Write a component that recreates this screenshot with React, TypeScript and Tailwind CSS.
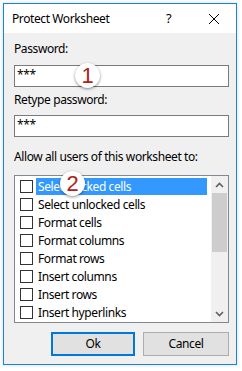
import React from "react";

const items = [
  "Select locked cells",
  "Select unlocked cells",
  "Format cells",
  "Format columns",
  "Format rows",
  "Insert columns",
  "Insert rows",
  "Insert hyperlinks",
];

function Badge(props: { n: string; className: string }) {
  return (
    <div
      className={
        "absolute w-[25px] h-[25px] rounded-full bg-white flex items-center justify-center text-[#b0211a] text-[22px] leading-none tracking-normal shadow-[0_1px_3px_rgba(0,0,0,0.45)] " +
        props.className
      }
      style={{ fontFamily: '"Liberation Sans", sans-serif' }}
    >
      {props.n}
    </div>
  );
}

function Chevron(props: { up?: boolean }) {
  return (
    <svg width="9" height="6" viewBox="0 0 9 6">
      <path
        d={props.up ? "M1 5 L4.5 1.5 L8 5" : "M1 1 L4.5 4.5 L8 1"}
        fill="none"
        stroke="#606060"
        strokeWidth="1.6"
      />
    </svg>
  );
}

export default function App() {
  return (
    <div
      className="w-[242px] h-[371px] bg-white pl-[3px] pt-[3px] text-[12px] tracking-[-0.4px] text-black"
      style={{ fontFamily: '"Noto Sans", sans-serif' }}
    >
      <div className="relative w-[234px] h-[362px] border border-[#1883d7] flex flex-col shadow-[0_0_4px_rgba(0,0,0,0.15)]">
        {/* title bar */}
        <div className="h-[29px] bg-white flex items-center shrink-0">
          <div className="flex-1 pl-[8px] leading-none">Protect Worksheet</div>
          <div className="w-[45px] h-full flex items-center justify-center text-[13px]">?</div>
          <div className="w-[45px] h-full flex items-center justify-center">
            <svg width="10" height="10" viewBox="0 0 10 10">
              <path d="M0 0 L10 10 M10 0 L0 10" stroke="#000" strokeWidth="1" />
            </svg>
          </div>
        </div>

        <div className="flex-1 bg-[#f0f0f0] pl-[10px] pr-[7px] flex flex-col">
          <div className="mt-[8px] h-[16px] leading-[16px]">Password:</div>
          <div className="mt-[8px] h-[22px] bg-white border border-[#7a7a7a] pl-[2px] leading-[18px]">***</div>
          <div className="mt-[5px] h-[16px] leading-[16px]">Retype password:</div>
          <div className="mt-[7px] h-[22px] bg-white border border-[#7a7a7a] pl-[2px] leading-[18px]">***</div>
          <div className="mt-[12px] h-[16px] leading-[16px]">Allow all users of this worksheet to:</div>

          <div className="mt-[10px] h-[148px] bg-white border border-[#828790] flex">
            <div className="flex-1 pt-[1px] flex flex-col">
              {items.map((t, i) => (
                <div key={t} className="h-[18px] flex items-center pl-[5px] pr-[4px]">
                  <div className="w-[13px] h-[13px] border border-[#333] bg-white shrink-0" />
                  <div
                    className={
                      i === 0
                        ? "ml-[3px] flex-1 h-[17px] leading-[17px] pl-[2px] bg-[#3399ff] text-white"
                        : "ml-[3px] flex-1 h-[17px] leading-[17px] pl-[2px]"
                    }
                  >
                    {t}
                  </div>
                </div>
              ))}
            </div>
            <div className="w-[17px] bg-[#f0f0f0] flex flex-col">
              <div className="h-[17px] flex items-center justify-center">
                <Chevron up />
              </div>
              <div className="mx-[1px] h-[59px] bg-[#cdcdcd]" />
              <div className="flex-1" />
              <div className="h-[17px] flex items-center justify-center">
                <Chevron />
              </div>
            </div>
          </div>

          <div className="mt-[9px] flex justify-end gap-[8px]">
            <button className="w-[84px] h-[24px] bg-[#e1e1e1] border-2 border-[#0078d7]">Ok</button>
            <button className="w-[86px] h-[24px] bg-[#e1e1e1] border border-[#adadad]">Cancel</button>
          </div>
        </div>

        <Badge n="1" className="left-[71px] top-[59px]" />
        <Badge n="2" className="left-[56px] top-[167px]" />
      </div>
    </div>
  );
}
